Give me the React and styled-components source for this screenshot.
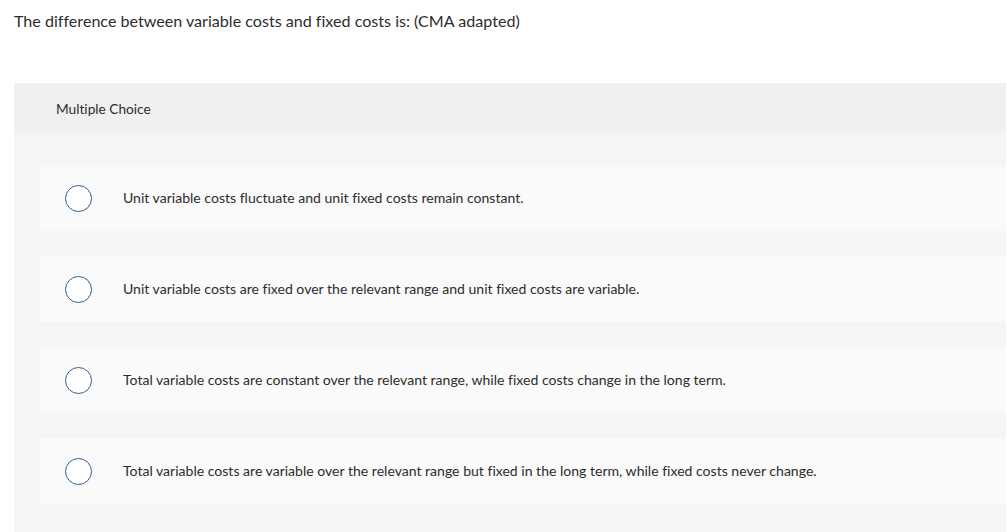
import React from "react";
import styled, { createGlobalStyle } from "styled-components";

const Global = createGlobalStyle`
  html, body { margin: 0; padding: 0; background: #fff; }
  body {
    font-family: Lato, "Open Sans", "Liberation Sans", Arial, sans-serif;
    color: #333;
    font-variant-ligatures: none;
  }
`;

const Page = styled.div`
  padding: 10px 1px 0 14px;
`;

const Question = styled.p`
  margin: 0;
  font-size: 16.1px;
  line-height: 22px;
  color: #2d2d2d;
`;

const Panel = styled.section`
  margin-top: 51px;
  background: #f5f5f5;
`;

const PanelHeader = styled.div`
  height: 50px;
  display: flex;
  align-items: center;
  padding-left: 42px;
  background: #f0f0f0;
  font-size: 13.7px;
  color: #2d2d2d;
`;

const Options = styled.div`
  display: flex;
  flex-direction: column;
  gap: 25px;
  padding: 32px 0 40px 26px;
`;

const Option = styled.label`
  display: flex;
  align-items: center;
  height: 66px;
  background: #fafafa;
  border-radius: 2px 0 0 2px;
  cursor: pointer;
`;

const Radio = styled.span`
  width: 25px;
  height: 25px;
  margin-left: 25px;
  margin-right: 31px;
  border: 1.6px solid #2f5f8f;
  border-radius: 50%;
  background: #fff;
  flex-shrink: 0;
`;

const OptionText = styled.span`
  font-size: 14.05px;
  line-height: 18px;
  color: #2d2d2d;
`;

const choices = [
  "Unit variable costs fluctuate and unit fixed costs remain constant.",
  "Unit variable costs are fixed over the relevant range and unit fixed costs are variable.",
  "Total variable costs are constant over the relevant range, while fixed costs change in the long term.",
  "Total variable costs are variable over the relevant range but fixed in the long term, while fixed costs never change.",
];

export default function App() {
  return (
    <>
      <Global />
      <Page>
        <Question>The difference between variable costs and fixed costs is: (CMA adapted)</Question>
        <Panel>
          <PanelHeader>Multiple Choice</PanelHeader>
          <Options>
            {choices.map((c) => (
              <Option key={c}>
                <Radio />
                <OptionText>{c}</OptionText>
              </Option>
            ))}
          </Options>
        </Panel>
      </Page>
    </>
  );
}
